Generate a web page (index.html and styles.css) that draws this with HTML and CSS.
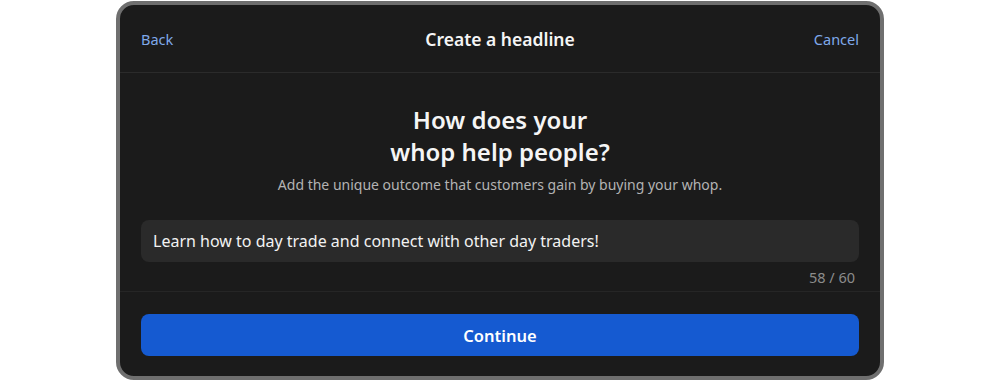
FILE: index.html
```html
<!DOCTYPE html>
<html lang="en">
<head>
<meta charset="utf-8">
<title>Create a headline</title>
<link rel="stylesheet" href="styles.css">
</head>
<body>
<div class="frame">
  <header class="topbar">
    <a class="link" href="#">Back</a>
    <h1 class="title">Create a headline</h1>
    <a class="link" href="#">Cancel</a>
  </header>
  <main class="body">
    <h2 class="question">How does your<br>whop help people?</h2>
    <p class="hint">Add the unique outcome that customers gain by buying your whop.</p>
    <div class="field">Learn how to day trade and connect with other day traders!</div>
    <div class="counter">58 / 60</div>
  </main>
  <footer class="footer">
    <button class="btn">Continue</button>
  </footer>
</div>
</body>
</html>
```
FILE: styles.css
```css
* { box-sizing: border-box; }
html, body { margin: 0; padding: 0; background: #ffffff; }
body {
  font-family: "Noto Sans", "Open Sans", sans-serif;
  color: #f2f2f2;
}
.frame {
  width: 768px;
  height: 379px;
  margin: 1px auto 0;
  background: #1b1b1b;
  border: 4px solid #6f6f6f;
  border-radius: 18px;
  display: flex;
  flex-direction: column;
  overflow: hidden;
}
.topbar {
  height: 68px;
  flex: none;
  display: flex;
  align-items: center;
  justify-content: space-between;
  padding: 0 21px;
  border-bottom: 1px solid #2b2b2b;
}
.link {
  color: #7fa9ea;
  text-decoration: none;
  font-size: 14.5px;
  width: 60px;
}
.link:last-child { text-align: right; }
.title {
  margin: 0;
  font-size: 17.5px;
  font-weight: 600;
  color: #f5f5f5;
}
.body {
  padding: 31px 21px 0;
  display: flex;
  flex-direction: column;
  flex: none;
  height: 219px;
  border-bottom: 1px solid #262626;
}
.question {
  margin: 0;
  text-align: center;
  font-size: 24px;
  line-height: 32px;
  font-weight: 600;
  color: #f5f5f5;
}
.hint {
  margin: 7px 0 0;
  text-align: center;
  font-size: 14px;
  line-height: 20px;
  color: #b3b3b3;
}
.field {
  margin-top: 25px;
  height: 42px;
  background: #2a2a2a;
  border-radius: 8px;
  padding: 0 12px;
  display: flex;
  align-items: center;
  font-size: 16px;
  color: #f2f2f2;
}
.counter {
  margin-top: 5px;
  text-align: right;
  padding-right: 4px;
  font-size: 14.5px;
  line-height: 20px;
  color: #8c8c8c;
}
.footer {
  padding: 22px 21px 0;
}
.btn {
  width: 100%;
  height: 42px;
  border: none;
  border-radius: 8px;
  background: #155ad1;
  color: #ffffff;
  font-family: inherit;
  font-size: 16.5px;
  font-weight: 600;
}
```
